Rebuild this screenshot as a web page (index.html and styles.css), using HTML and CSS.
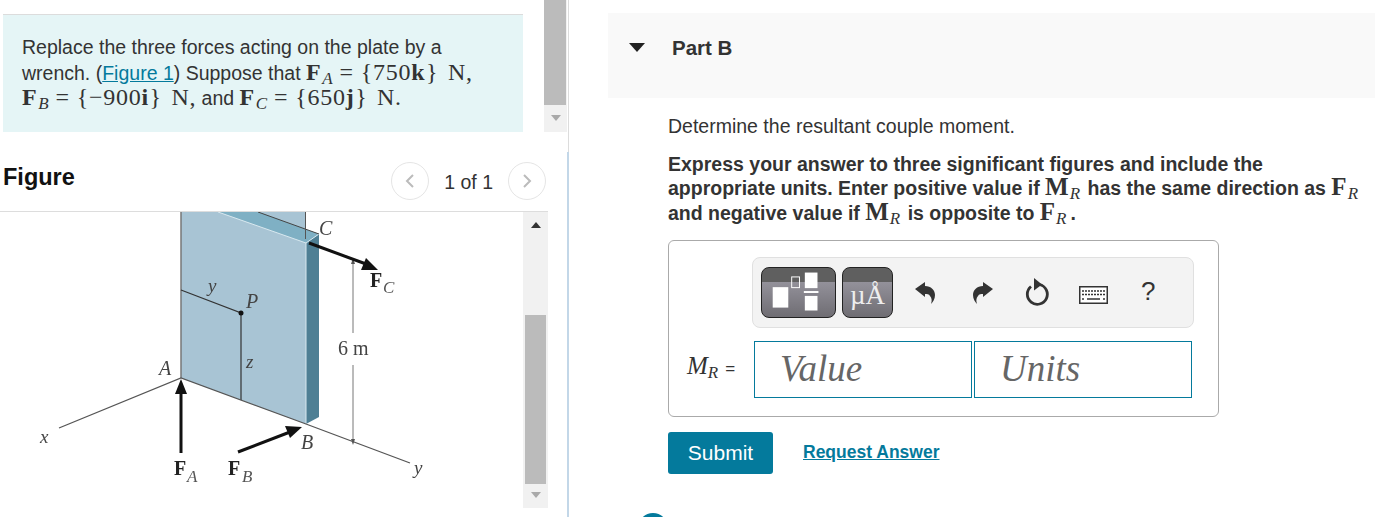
FILE: index.html
```html
<!DOCTYPE html>
<html lang="en">
<head>
<meta charset="utf-8">
<title>Part B</title>
<link rel="stylesheet" href="styles.css">
</head>
<body>
<div class="page">
  <section class="left">
    <div class="left-top">
      <div class="problem">
        <p>Replace the three forces acting on the plate by a wrench. (<a href="#">Figure 1</a>) Suppose that <span class="m"><b>F</b><i class="s">A</i><span class="eq">=</span>{750<b>k</b>} N,</span> <span class="m"><b>F</b><i class="s">B</i><span class="eq">=</span>{−900<b>i</b>} N,</span> and <span class="m"><b>F</b><i class="s">C</i><span class="eq">=</span>{650<b>j</b>} N.</span></p>
      </div>
      <div class="sb sb-top">
        <div class="thumb"></div>
        <div class="arrow-down"></div>
      </div>
    </div>
    <div class="left-bottom">
      <header class="fig-head">
        <h2>Figure</h2>
        <div class="pager">
          <span class="circle"><svg width="12" height="16" viewBox="0 0 12 16"><path d="M9 2 3 8l6 6" fill="none" stroke="#bbb" stroke-width="2"/></svg></span>
          <span class="count">1 of 1</span>
          <span class="circle"><svg width="12" height="16" viewBox="0 0 12 16"><path d="m3 2 6 6-6 6" fill="none" stroke="#bbb" stroke-width="2"/></svg></span>
        </div>
      </header>
      <div class="fig-body">
        <svg class="diagram" width="520" height="296" viewBox="3 212 520 296">
          <polygon points="181,212 306,212 306,243 306,424 181,378" fill="#a8c4d4"/>
          <polygon points="218,212 258,212 319,234 306,243" fill="#7fb0c4"/>
          <polygon points="306,243 319,234 319,417 306,424" fill="#4e7f94"/>
          <path d="M218 212 306 243 319 234M306 243V424" fill="none" stroke="#d8e8ef" stroke-width="1"/>
          <path d="M258 212 319 234" stroke="#444" stroke-width="1"/>
          <path d="M305.500 212V239" stroke="#555" stroke-width="1"/>
          <path d="M181 212V378" stroke="#777" stroke-width="1.500"/>
          <path d="M181 290 241 313V400" fill="none" stroke="#333" stroke-width="1.200"/>
          <circle cx="241" cy="313" r="2.500" fill="#111"/>
          <path d="M59 428 181 378 306 424 410 463" fill="none" stroke="#555" stroke-width="1.300"/>
          <path d="M353 263V333M353 365V442" stroke="#777" stroke-width="1"/>
          <path d="m353 258-2 6h4zM353 445l-2-6h4z" fill="#555"/>
          <path d="M181 453V392" stroke="#111" stroke-width="3"/>
          <path d="m181 379-6 15h12z" fill="#111"/>
          <path d="M238 452 290 432" stroke="#111" stroke-width="3"/>
          <path d="m302 427-17-1 5 12z" fill="#111"/>
          <path d="M309 243 366 264" stroke="#111" stroke-width="3"/>
          <path d="m378 270-17 0 5-12z" fill="#111"/>
          <g class="lbl">
            <text x="319" y="235">C</text>
            <text x="208" y="292" class="sm">y</text>
            <text x="246" y="308">P</text>
            <text x="246" y="368" class="sm">z</text>
            <text x="159" y="375">A</text>
            <text x="40" y="443" class="sm">x</text>
            <text x="301" y="449">B</text>
            <text x="414" y="474" class="sm">y</text>
          </g>
          <text x="338" y="355" class="dim">6 m</text>
          <text x="370" y="287" class="fb">F</text><text x="383" y="293" class="fs">C</text>
          <text x="174" y="475" class="fb">F</text><text x="187" y="482" class="fs">A</text>
          <text x="228" y="475" class="fb">F</text><text x="242" y="482" class="fs">B</text>
        </svg>
        <div class="sb sb-fig">
          <div class="arrow-up"></div>
          <div class="thumb"></div>
          <div class="arrow-down"></div>
        </div>
      </div>
    </div>
  </section>

  <main class="right">
    <div class="part-band">
      <span class="caret"></span>
      <h2>Part B</h2>
    </div>
    <div class="part-body">
      <p class="lead">Determine the resultant couple moment.</p>
      <p class="instr">Express your answer to three significant figures and include the appropriate units. Enter positive value if <span class="m"><b>M</b><i class="s">R</i></span> has the same direction as <span class="m"><b>F</b><i class="s">R</i></span> and negative value if <span class="m"><b>M</b><i class="s">R</i></span> is opposite to <span class="m"><b>F</b><i class="s">R</i></span><span class="stop">.</span></p>
      <div class="answer">
        <div class="toolbar">
          <button class="tool tool-a" type="button" aria-label="Templates">
            <svg width="75" height="51" viewBox="0 0 75 51">
              <rect x="11" y="20" width="16" height="21" fill="#fff"/>
              <rect x="30.500" y="9.500" width="8" height="11" fill="none" stroke="#fff"/>
              <rect x="44" y="5" width="13" height="16" fill="#fff"/>
              <rect x="43" y="24" width="15" height="2" fill="#fff"/>
              <rect x="44" y="29" width="13" height="15" fill="#fff"/>
            </svg>
          </button>
          <button class="tool tool-b" type="button">µÅ</button>
          <svg class="ic ic-undo" width="20" height="22" viewBox="0 0 20 22"><path d="M0 7 10 0v4c6 0 10 4 10 9 0 4-2 7-4 9 1-3 1-6-1-8-1-2-3-2-5-2v3z" fill="#333"/></svg>
          <svg class="ic ic-redo" width="20" height="22" viewBox="0 0 20 22"><path d="M20 7 10 0v4C4 4 0 8 0 13c0 4 2 7 4 9-1-3-1-6 1-8 1-2 3-2 5-2v3z" fill="#333"/></svg>
          <svg class="ic ic-reset" width="24" height="28" viewBox="0 0 24 28"><path d="M14.500 6.500A10 10 0 1 1 6 8.500" fill="none" stroke="#333" stroke-width="2.800"/><path d="m9 0 8 6.500-8 6z" fill="#333"/></svg>
          <svg class="ic ic-kbd" width="29" height="18" viewBox="0 0 29 18">
            <rect x=".750" y=".750" width="27.500" height="16.500" fill="#fff" stroke="#333" stroke-width="1.500"/>
            <path d="M3 5h23M3 8.500h23" stroke="#333" stroke-width="1.500" stroke-dasharray="2 1"/>
            <path d="M3 13h2M8 13h13M24 13h2" stroke="#333" stroke-width="1.500"/>
          </svg>
          <span class="help">?</span>
        </div>
        <div class="input-row">
          <label class="var"><span class="m"><i>M</i><i class="s">R</i></span><span class="var-eq">=</span></label>
          <div class="field">Value</div>
          <div class="field">Units</div>
        </div>
      </div>
      <div class="actions">
        <button class="submit" type="button">Submit</button>
        <a class="req" href="#">Request Answer</a>
      </div>
      <div class="dot"></div>
    </div>
  </main>
</div>
</body>
</html>
```

FILE: styles.css
```css
* { box-sizing: border-box; }
html, body { margin: 0; height: 100%; overflow: hidden; background: #fff; }
body { font-family: "Liberation Sans", Arial, sans-serif; color: #333; }
p, h2 { margin: 0; }

.page { display: flex; height: 517px; overflow: hidden; }

.left { width: 569px; flex: none; display: flex; flex-direction: column; }
.left-top { display: flex; height: 152px; padding-left: 3px; align-items: flex-start; border-right: 1px solid #dcdcdc; }
.problem { width: 520px; height: 118px; margin-top: 14px; padding: 20px 19px 0; background: #e5f5f6; border-top: 1px solid #dcdcdc; font-size: 19.500px; line-height: 25.500px; }
.problem a { color: #047a9c; }
.m { font-family: "Liberation Serif", serif; font-size: 24px; line-height: 0; letter-spacing: .700px; white-space: nowrap; word-spacing: 3px; }
.m b { letter-spacing: 1.500px; }
.s { font-size: 17px; line-height: 0; position: relative; top: 4px; letter-spacing: 0; }
.eq { margin: 0 7px 0 7px; }

.sb { background: #f1f1f1; display: flex; flex-direction: column; align-items: center; }
.sb .thumb { background: #bbb; }
.arrow-down, .arrow-up { width: 0; height: 0; border-left: 5px solid transparent; border-right: 5px solid transparent; }
.arrow-down { border-top: 6px solid #a9a9a9; }
.arrow-up { border-bottom: 6px solid #333; }
.sb-top { width: 23px; height: 132px; margin-left: 21px; }
.sb-top .thumb { width: 22px; height: 105px; align-self: flex-start; }
.sb-top .arrow-down { margin-top: 10px; }

.left-bottom { flex: 1; border-right: 2px solid #c3d7e8; }
.fig-head { display: flex; justify-content: space-between; align-items: center; width: 548px; height: 60px; padding-left: 3px; border-bottom: 1px solid #ddd; }
.fig-head h2 { font-size: 23.500px; font-weight: 700; color: #111; margin-top: -8px; }
.pager { display: flex; align-items: center; margin-top: -2px; margin-right: 2px; }
.circle { width: 38px; height: 38px; border: 1px solid #e5e5e5; border-radius: 50%; display: flex; align-items: center; justify-content: center; }
.count { font-size: 19.500px; line-height: 24px; margin: 2px 15px 0; }

.fig-body { display: flex; width: 548px; padding-left: 3px; height: 296px; }
.diagram { display: block; flex: none; filter: blur(.35px); }
.lbl text { font: italic 20px "Liberation Serif", serif; fill: #444; }
.lbl .sm { font-size: 19px; }
.dim { font: 20px "Liberation Serif", serif; fill: #444; }
.fb { font: bold 20px "Liberation Serif", serif; fill: #222; }
.fs { font: italic 17px "Liberation Serif", serif; fill: #555; }
.sb-fig { width: 25px; height: 296px; }
.sb-fig .arrow-up { margin-top: 10px; }
.sb-fig .thumb { width: 21px; height: 169px; margin-top: 87px; }
.sb-fig .arrow-down { margin-top: 8px; }

.right { width: 767px; flex: none; margin-left: 39px; }
.part-band { display: flex; align-items: flex-start; height: 85px; margin-top: 13px; background: #f9f9f9; padding: 23px 0 0 21px; }
.caret { width: 0; height: 0; margin-top: 7px; border-left: 8px solid transparent; border-right: 8px solid transparent; border-top: 9px solid #222; }
.part-band h2 { margin-left: 27px; font-size: 20.500px; line-height: 24px; color: #333; }

.part-body { padding: 16px 0 0 60px; font-size: 19.500px; line-height: 24.500px; }
.lead { margin-bottom: 13px; }
.instr { font-weight: 700; }
.instr .m { font-weight: 400; font-size: 25px; letter-spacing: 0; }
.instr .m b { letter-spacing: 1px; }
.instr .s { margin-right: 2px; }
.stop { margin-left: 2px; }
.answer { width: 551px; height: 177px; margin-top: 15px; border: 1px solid #aaa; border-radius: 6px; padding: 16px 0 0 83px; }
.toolbar { display: flex; align-items: center; width: 442px; height: 71px; padding-left: 8px; background: #f3f3f3; border: 1px solid #e0e0e0; border-radius: 8px; }
.tool { height: 51px; padding: 0; border: 1.500px solid #222; border-radius: 8px; background: linear-gradient(#5f5f5f 0 14px, #93919a 14px, #6f6d73); color: #fff; display: flex; align-items: center; justify-content: center; }
.tool-a { width: 75px; }
.tool-b { width: 51px; margin-left: 6px; font: 27px "Liberation Serif", serif; padding-top: 6px; color: #eee; }
.ic { flex: none; display: block; }
.ic-undo { margin-left: 22px; }
.ic-redo { margin-left: 38px; }
.ic-reset { margin-left: 32px; margin-top: -2px; }
.ic-kbd { margin-left: 30px; margin-top: 5px; }
.help { margin-left: 33px; font-size: 26px; line-height: 26px; margin-top: -3px; }

.input-row { display: flex; align-items: center; margin-top: 13px; margin-left: -65px; }
.var { width: 67px; flex: none; font-size: 17px; white-space: nowrap; }
.var .m { font-size: 25px; letter-spacing: 0; }
.var-eq { margin-left: 7px; }
.field { width: 217.500px; height: 57px; margin-right: 2.500px; padding-left: 25px; border: 1px solid #047a9c; font: italic 37px/54px "Liberation Serif", serif; color: #666; }

.actions { display: flex; align-items: center; margin-top: 15px; }
.submit { width: 105px; height: 42px; padding: 0; border: 0; border-radius: 3px; background: #047a9c; color: #fff; font: 21px "Liberation Sans", sans-serif; }
.req { margin-left: 30px; margin-top: -2px; font-size: 17.500px; font-weight: 700; color: #047a9c; }
.dot { width: 30px; height: 30px; margin: 39px 0 0 -30px; border-radius: 50%; background: #047a9c; }
```
